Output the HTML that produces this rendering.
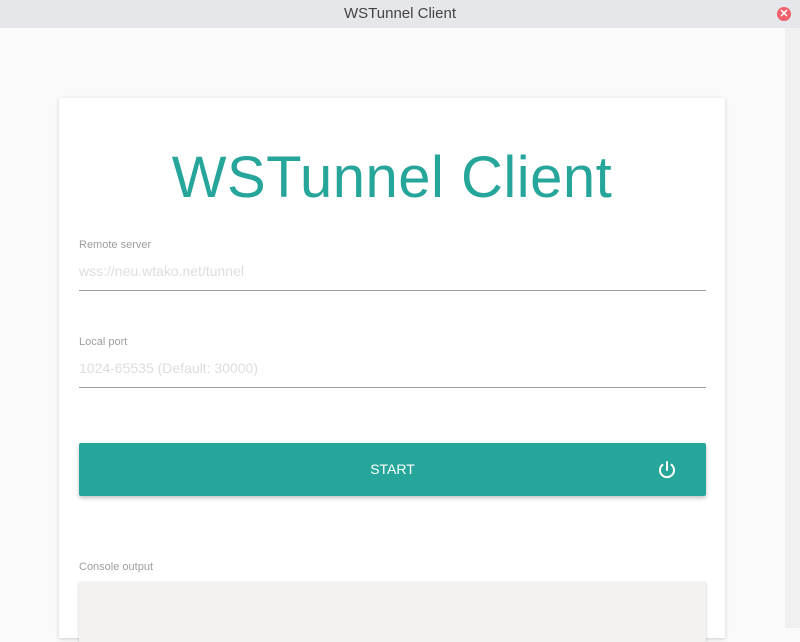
<!DOCTYPE html>
<html><head><style>
*{margin:0;padding:0;box-sizing:border-box}
body{width:800px;height:628px;overflow:hidden;background:#fafafa;font-family:"Liberation Sans",sans-serif;position:relative}
.tb{position:absolute;left:0;top:0;width:800px;height:28px;background:#e6e7ea;text-align:center;line-height:28px;font-size:15px;color:#444}
.x{position:absolute;left:777px;top:7px;width:14px;height:14px;border-radius:50%;background:#f0606a;color:#fff;font-size:11px;line-height:14px;text-align:center;font-weight:bold}
.sb{position:absolute;left:785px;top:28px;width:15px;height:600px;background:#f0f0f0}
.th{position:absolute;left:787px;top:43px;width:11px;height:347px;background:#c1c1c1}
.card{position:absolute;left:59px;top:98px;width:666px;height:540px;background:#fff;box-shadow:0 1px 4px rgba(0,0,0,.18)}
h1{position:absolute;left:0;width:666px;top:46px;text-align:center;color:#26a69a;font-size:58px;font-weight:normal;letter-spacing:0.5px}
.lbl{position:absolute;left:20px;font-size:11px;color:#9e9e9e}
.inp{position:absolute;left:20px;width:627px;font-size:14px;color:#ddd;border-bottom:1px solid #9e9e9e;height:28px}
.btn{position:absolute;left:20px;top:345px;width:627px;height:53px;background:#26a69a;border-radius:2px;box-shadow:0 2px 4px rgba(0,0,0,.25);color:#fff;font-size:14px;text-align:center;line-height:53px}
.con{position:absolute;left:20px;top:484px;width:627px;height:60px;background:#f4f1ee;box-shadow:0 1px 3px rgba(0,0,0,.2)}
</style></head><body>
<div class="tb">WSTunnel Client</div><div class="x">✕</div>
<div class="sb"><div class="th"></div></div>
<div class="card">
<h1>WSTunnel Client</h1>
<div class="lbl" style="top:141px">Remote server</div>
<div class="inp" style="top:165px">wss://neu.wtako.net/tunnel</div>
<div class="lbl" style="top:238px">Local port</div>
<div class="inp" style="top:262px">1024-65535 (Default: 30000)</div>
<div class="btn">START
<svg style="position:absolute;left:578px;top:17px" width="20" height="20" viewBox="0 0 20 20" fill="none" stroke="#fff" stroke-width="2" stroke-linecap="round"><path d="M10 2v8"/><path d="M5.5 4.8A7 7 0 1 0 14.5 4.8"/></svg>
</div>
<div class="lbl" style="top:463px">Console output</div>
<div class="con"></div>
</div>
</body></html>
